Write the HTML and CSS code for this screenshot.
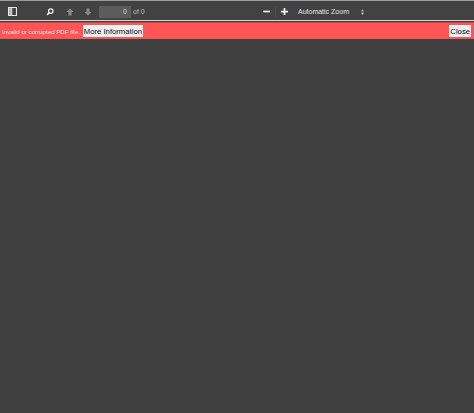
FILE: index.html
```html
<!DOCTYPE html>
<html>

<head>
    <title>PDF Viewer</title>
    <meta name="viewport" content="width=device-width, initial-scale=1">
    <link rel="stylesheet" href="styles.css">
</head>

<body>
    <div class="toolbar">
        <div class="toolbar-left">
            <button class="tool-btn sidebar-btn" title="Toggle Sidebar">
                <svg width="9" height="9" viewBox="0 0 10 10">
                    <path fill="#e6e6e6" fill-rule="evenodd" d="M0 0h10v10H0zM1.200 1.200v7.600h2.300V1.200zM4.700 1.200v7.600h4.100V1.200z" />
                    <path fill="#bdbdbd" d="M1.200 1.200h2.300v7.600H1.200z" />
                </svg>
            </button>
            <button class="tool-btn find-btn" title="Find">
                <svg width="8" height="8" viewBox="0 0 10 10">
                    <circle cx="6" cy="3.800" r="2.800" fill="none" stroke="#f0f0f0" stroke-width="1.600" />
                    <path d="M4.200 5.800L1.200 8.800" stroke="#f0f0f0" stroke-width="2" />
                </svg>
            </button>
            <button class="tool-btn prev-btn" title="Previous">
                <svg width="8" height="8" viewBox="0 0 10 10">
                    <path fill="#8a8a8a" d="M5 0.500L9.500 5H7v4.500H3V5H0.500z" />
                </svg>
            </button>
            <button class="tool-btn next-btn" title="Next">
                <svg width="8" height="8" viewBox="0 0 10 10">
                    <path fill="#8a8a8a" d="M5 9.500L9.500 5H7V0.500H3V5H0.500z" />
                </svg>
            </button>
            <input class="page-input" type="text" value="0">
            <span class="page-count">of 0</span>
        </div>
        <div class="toolbar-center">
            <button class="tool-btn zoom-btn" title="Zoom Out">
                <svg width="7" height="7" viewBox="0 0 8 8">
                    <path fill="#e6e6e6" d="M0 3h8v2H0z" />
                </svg>
            </button>
            <span class="zoom-split"></span>
            <button class="tool-btn zoom-btn" title="Zoom In">
                <svg width="7" height="7" viewBox="0 0 8 8">
                    <path fill="#f0f0f0" d="M3 0h2v3h3v2H5v3H3V5H0V3h3z" />
                </svg>
            </button>
            <div class="scale-select">
                <span>Automatic Zoom</span>
                <svg width="3" height="6" viewBox="0 0 4 7">
                    <path fill="#d8d8d8" d="M2 0l2 2.500H0zM2 7L0 4.500h4z" />
                </svg>
            </div>
        </div>
    </div>

    <div class="error-bar">
        <span class="error-msg">Invalid or corrupted PDF file.</span>
        <button class="error-btn">More Information</button>
        <button class="error-btn close-btn">Close</button>
    </div>

    <div class="viewer"></div>
</body>

</html>
```

FILE: styles.css
```css
html,
body {
    height: 100%;
}

body {
    margin: 0;
    display: flex;
    flex-direction: column;
    background: #404040;
    font-family: "Liberation Sans", Arial, sans-serif;
    overflow: hidden;
}

.toolbar {
    height: 17px;
    flex: none;
    display: flex;
    align-items: center;
    padding: 2px 0 0;
    background: #424242;
    border-top: 1px solid #9a9a9a;
    border-bottom: 1px solid #d4d4d4;
}

.toolbar-left {
    width: 255px;
    display: flex;
    align-items: center;
}

.toolbar-center {
    display: flex;
    align-items: center;
}

.tool-btn {
    padding: 0;
    border: none;
    background: none;
    display: flex;
    align-items: center;
    justify-content: center;
}

.sidebar-btn {
    margin-left: 8px;
}

.find-btn {
    margin-left: 29px;
}

.prev-btn {
    margin-left: 12px;
}

.next-btn {
    margin-left: 10px;
}

.page-input {
    margin-left: 7px;
    width: 32px;
    height: 12px;
    box-sizing: border-box;
    padding: 0 4px;
    border: none;
    background: #5c5c5c;
    color: #d8d8d8;
    font-family: inherit;
    font-size: 7px;
    text-align: right;
}

.page-count {
    margin-left: 2px;
    color: #bdbdbd;
    font-size: 7px;
}

.zoom-btn {
    margin-left: 8px;
}

.zoom-split {
    width: 1px;
    height: 10px;
    margin-left: 5px;
    background: #4e4e4e;
}

.zoom-split + .zoom-btn {
    margin-left: 5px;
}

.scale-select {
    margin-left: 10px;
    display: flex;
    align-items: center;
    gap: 12px;
    color: #e2e2e2;
    font-size: 7px;
}

.error-bar {
    height: 16px;
    flex: none;
    margin-top: 1px;
    display: flex;
    align-items: center;
    padding-left: 2px;
    background: #ff5555;
    border-top: 1px solid #b04c4c;
}

.error-msg {
    color: #ffe0e0;
    font-size: 6.150px;
}

.error-btn {
    margin-left: 3px;
    height: 12px;
    padding: 0 1px;
    border: none;
    background: #efefef;
    color: #111;
    font-family: inherit;
    font-size: 7.700px;
}

.close-btn {
    margin-left: auto;
    margin-right: 3px;
}

.viewer {
    flex: 1;
    background: #404040;
}
```
